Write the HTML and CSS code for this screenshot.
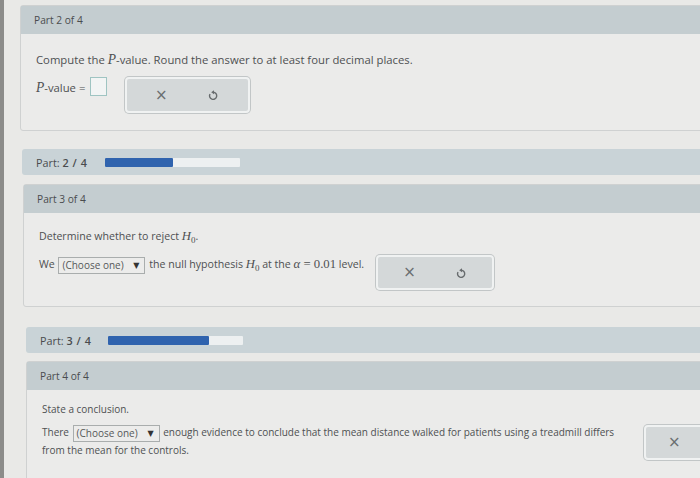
FILE: index.html
```html
<!DOCTYPE html>
<html>
<head>
<meta charset="utf-8">
<link rel="stylesheet" href="styles.css">
</head>
<body>
<div class="page">
  <section class="card c1">
    <div class="card-head">Part 2 of 4</div>
    <div class="card-body b1">
      <p class="q">Compute the <i class="m">P</i>-value. Round the answer to at least four decimal places.</p>
      <div class="row">
        <span class="lbl"><i class="m">P</i>-value =</span>
        <span class="input"></span>
        <div class="btns w1">
          <span class="ix">×</span>
          <svg class="undo" viewBox="0 0 12 12" width="12" height="12"><path d="M6.2 3.2 A3.6 3.6 0 1 1 3 5" fill="none" stroke="#676b6d" stroke-width="1.4"/><path d="M4.2 3.2 L7 1.2 L7 5.2 Z" fill="#676b6d"/></svg>
        </div>
      </div>
    </div>
  </section>

  <div class="prog p1">
    <span class="plbl">Part: <b>2 / 4</b></span>
    <div class="track"><div class="fill" style="width:50%"></div></div>
  </div>

  <section class="card c2">
    <div class="card-head">Part 3 of 4</div>
    <div class="card-body b2">
      <p class="q">Determine whether to reject <i class="m">H</i><sub class="m0">0</sub>.</p>
      <div class="row2">
        <p class="line l2">We <span class="sel"><span>(Choose one)</span><span class="tri">▼</span></span> the null hypothesis <i class="m">H</i><sub class="m0">0</sub> at the <i class="m">α</i><span class="m"> = 0.01</span> level.</p>
        <div class="btns w2">
          <span class="ix">×</span>
          <svg class="undo" viewBox="0 0 12 12" width="12" height="12"><path d="M6.2 3.2 A3.6 3.6 0 1 1 3 5" fill="none" stroke="#676b6d" stroke-width="1.4"/><path d="M4.2 3.2 L7 1.2 L7 5.2 Z" fill="#676b6d"/></svg>
        </div>
      </div>
    </div>
  </section>

  <div class="prog p2">
    <span class="plbl">Part: <b>3 / 4</b></span>
    <div class="track"><div class="fill" style="width:75%"></div></div>
  </div>

  <section class="card c3">
    <div class="card-head">Part 4 of 4</div>
    <div class="card-body b3">
      <p class="q">State a conclusion.</p>
      <div class="row3">
        <p class="line l3">There <span class="sel"><span>(Choose one)</span><span class="tri">▼</span></span> enough evidence to conclude that the mean distance walked for patients using a treadmill differs from the mean for the controls.</p>
        <div class="btns w3">
          <span class="ix">×</span>
        </div>
      </div>
    </div>
  </section>
</div>
</body>
</html>
```
FILE: styles.css
```css
html, body {
  margin: 0;
  padding: 0;
  height: 100%;
  overflow: hidden;
}
body {
  background: #e9e9e7;
  font-family: "Open Sans", "DejaVu Sans", sans-serif;
  font-size: 10px;
  color: #4e5052;
  border-left: 4px solid #8c8c8a;
  box-sizing: border-box;
}
.page {
  padding-top: 5px;
  width: 760px;
}
.card {
  border: 1px solid #cfd1d1;
  border-radius: 3px;
  background: #ebebea;
}
.card-head {
  background: #c4cdd0;
  color: #4a4c4e;
  height: 28px;
  line-height: 28px;
  padding-left: 13px;
  font-size: 10.2px;
}
.card-body {
  padding-left: 15px;
}
.q {
  margin: 0;
  line-height: 14px;
}
.m {
  font-family: "Liberation Serif", "DejaVu Serif", serif;
  font-size: 1.2em;
}
i.m { font-style: italic; }
.m0 {
  font-family: "Liberation Serif", serif;
  font-size: 0.85em;
}
.c1 { margin-left: 16px; }
.b1 {
  height: 96px;
  padding-top: 19px;
  box-sizing: border-box;
  font-size: 11.3px;
}
.row {
  display: flex;
  align-items: flex-start;
  margin-top: 10px;
}
.lbl { margin-top: 3px; }
.input {
  width: 15px;
  height: 17px;
  border: 1px solid #9fc4c2;
  background: #f2f4f4;
  margin-left: 5px;
}
.btns {
  display: flex;
  align-items: center;
  justify-content: space-around;
  background: #d4d8d9;
  border: 2px solid #f0f2f2;
  box-shadow: 0 0 0 1px #c2c6c7;
  border-radius: 4px;
  box-sizing: border-box;
}
.w1 { width: 125px; height: 36px; margin-left: 18px; margin-top: 0; padding: 0 10px 0 8px; }
.w2 { width: 118px; height: 35px; padding: 0 6px; }
.w3 { width: 80px; height: 35px; justify-content: flex-start; padding-left: 22px; }
.ix {
  font-size: 15px;
  color: #6a6e70;
  font-family: "DejaVu Sans", sans-serif;
  line-height: 1;
}
.undo { display: block; }

.prog {
  display: flex;
  align-items: center;
  height: 26px;
  background: #c9d3d7;
  border-radius: 3px;
}
.p1 { margin: 18px 0 9px 18px; }
.p2 { margin: 20px 0 8px 22px; }
.plbl {
  padding-left: 14px;
  width: 69px;
  color: #4a4c4e;
  font-size: 10.8px;
  white-space: nowrap;
}
.p2 .plbl { width: 68px; }
.plbl b { font-weight: 600; letter-spacing: 0.6px; }
.track {
  width: 135px;
  height: 9px;
  background: #edf0f1;
  border-radius: 1px;
}
.fill {
  height: 100%;
  background: #2f63ae;
  border-radius: 1px;
}

.c2 { margin-left: 19px; }
.b2 {
  height: 93px;
  padding-top: 16px;
  box-sizing: border-box;
  font-size: 10.6px;
}
.row2 {
  display: flex;
  align-items: flex-start;
  margin-top: 8px;
}
.line { margin: 0; line-height: 16px; }
.l2 { width: 321px; margin-right: 16px; padding-top: 1px; white-space: nowrap; }
.sel {
  display: inline-flex;
  justify-content: space-between;
  align-items: center;
  border: 1px solid #a9adad;
  background: #ececeb;
  padding: 0 5px 0 3px;
  height: 17px;
  line-height: 14px;
  width: 87px;
  box-sizing: border-box;
  vertical-align: middle;
  color: #55585a;
  font-size: 10px;
  margin: 0 1px;
}
.tri { font-size: 8px; color: #333; }

.c3 { margin-left: 22px; }
.b3 {
  height: 120px;
  padding-top: 12px;
  box-sizing: border-box;
}
.row3 {
  display: flex;
  align-items: flex-start;
  margin-top: 8px;
}
.l3 { width: 578px; margin-right: 24px; }
.w3 { margin-top: 1px; }
```
